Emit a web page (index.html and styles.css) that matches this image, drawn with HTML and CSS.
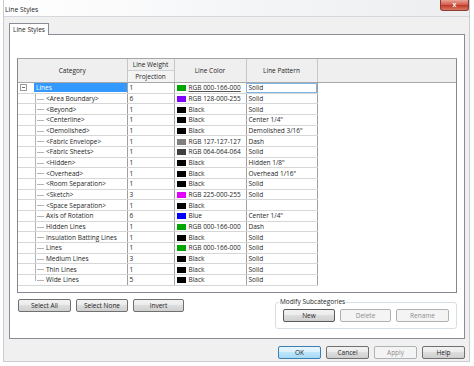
FILE: index.html
```html
<!DOCTYPE html>
<html lang="en">
<head>
    <meta charset="UTF-8">
    <title>Line Styles</title>
    <link rel="stylesheet" href="styles.css">
</head>
<body>

    <div class="window">
        <div class="titlebar">
            <span class="title">Line Styles</span>
            <span class="close">x</span>
        </div>

        <div class="client">
            <div class="tabs">
                <div class="tab">Line Styles</div>
            </div>

            <div class="panel">
                <!-- Line styles grid -->
                <div class="grid">
                    <table>
                        <colgroup>
                            <col class="c-cat">
                            <col class="c-weight">
                            <col class="c-color">
                            <col class="c-pattern">
                            <col>
                        </colgroup>
                        <thead>
                            <tr class="h1">
                                <th rowspan="2">Category</th>
                                <th>Line Weight</th>
                                <th rowspan="2">Line Color</th>
                                <th rowspan="2">Line Pattern</th>
                                <th rowspan="2" class="blank"></th>
                            </tr>
                            <tr class="h2">
                                <th>Projection</th>
                            </tr>
                        </thead>
                        <tbody>
                            <tr class="selected">
                                <td class="cat"><span class="expander"></span><span class="sel">Lines</span></td>
                                <td>1</td>
                                <td><span class="sw" style="background:#00a600"></span><u>RGB 000-166-000</u></td>
                                <td class="focus">Solid</td>
                                <td></td>
                            </tr>
                            <tr><td class="cat child">&lt;Area Boundary&gt;</td><td>6</td><td><span class="sw" style="background:#8000ff"></span>RGB 128-000-255</td><td>Solid</td><td></td></tr>
                            <tr><td class="cat child">&lt;Beyond&gt;</td><td>1</td><td><span class="sw" style="background:#000"></span>Black</td><td>Solid</td><td></td></tr>
                            <tr><td class="cat child">&lt;Centerline&gt;</td><td>1</td><td><span class="sw" style="background:#000"></span>Black</td><td>Center 1/4"</td><td></td></tr>
                            <tr><td class="cat child">&lt;Demolished&gt;</td><td>1</td><td><span class="sw" style="background:#000"></span>Black</td><td>Demolished 3/16"</td><td></td></tr>
                            <tr><td class="cat child">&lt;Fabric Envelope&gt;</td><td>1</td><td><span class="sw" style="background:#7f7f7f"></span>RGB 127-127-127</td><td>Dash</td><td></td></tr>
                            <tr><td class="cat child">&lt;Fabric Sheets&gt;</td><td>1</td><td><span class="sw" style="background:#404040"></span>RGB 064-064-064</td><td>Solid</td><td></td></tr>
                            <tr><td class="cat child">&lt;Hidden&gt;</td><td>1</td><td><span class="sw" style="background:#000"></span>Black</td><td>Hidden 1/8"</td><td></td></tr>
                            <tr><td class="cat child">&lt;Overhead&gt;</td><td>1</td><td><span class="sw" style="background:#000"></span>Black</td><td>Overhead 1/16"</td><td></td></tr>
                            <tr><td class="cat child">&lt;Room Separation&gt;</td><td>1</td><td><span class="sw" style="background:#000"></span>Black</td><td>Solid</td><td></td></tr>
                            <tr><td class="cat child">&lt;Sketch&gt;</td><td>3</td><td><span class="sw" style="background:#e100ff"></span>RGB 225-000-255</td><td>Solid</td><td></td></tr>
                            <tr><td class="cat child">&lt;Space Separation&gt;</td><td>1</td><td><span class="sw" style="background:#000"></span>Black</td><td></td><td></td></tr>
                            <tr><td class="cat child">Axis of Rotation</td><td>6</td><td><span class="sw" style="background:#0000ff"></span>Blue</td><td>Center 1/4"</td><td></td></tr>
                            <tr><td class="cat child">Hidden Lines</td><td>1</td><td><span class="sw" style="background:#00a600"></span>RGB 000-166-000</td><td>Dash</td><td></td></tr>
                            <tr><td class="cat child">Insulation Batting Lines</td><td>1</td><td><span class="sw" style="background:#000"></span>Black</td><td>Solid</td><td></td></tr>
                            <tr><td class="cat child">Lines</td><td>1</td><td><span class="sw" style="background:#00a600"></span>RGB 000-166-000</td><td>Solid</td><td></td></tr>
                            <tr><td class="cat child">Medium Lines</td><td>3</td><td><span class="sw" style="background:#000"></span>Black</td><td>Solid</td><td></td></tr>
                            <tr><td class="cat child">Thin Lines</td><td>1</td><td><span class="sw" style="background:#000"></span>Black</td><td>Solid</td><td></td></tr>
                            <tr><td class="cat child last">Wide Lines</td><td>5</td><td><span class="sw" style="background:#000"></span>Black</td><td>Solid</td><td></td></tr>
                        </tbody>
                    </table>
                </div>

                <div class="actions">
                    <div class="select-buttons">
                        <button class="btn w53">Select All</button>
                        <button class="btn w52">Select None</button>
                        <button class="btn w51">Invert</button>
                    </div>

                    <fieldset class="group">
                        <legend>Modify Subcategories</legend>
                        <button class="btn w52 hot">New</button>
                        <button class="btn w51" disabled>Delete</button>
                        <button class="btn w53" disabled>Rename</button>
                    </fieldset>
                </div>
            </div>

            <!-- Dialog buttons -->
            <div class="footer">
                <button class="btn w43 default">OK</button>
                <button class="btn w43">Cancel</button>
                <button class="btn w43" disabled>Apply</button>
                <button class="btn w43">Help</button>
            </div>
        </div>
    </div>

</body>
</html>
```

FILE: styles.css
```css
body {
    margin: 0;
    background: #fff;
    font-family: "Open Sans", Arial, sans-serif;
    font-size: 6.5px;
    color: #1e1e1e;
}

.window {
    margin-left: 3px;
    width: 467px;
    border: 1px solid #c9cdd2;
    border-top: none;
    box-sizing: border-box;
    background: linear-gradient(to right, #ffffff, #f3f4f6 60%, #eceef0);
}

.titlebar {
    height: 16px;
    display: flex;
    justify-content: space-between;
    align-items: flex-start;
}

.title {
    margin: 5px 0 0 1px;
    font-size: 6.8px;
}

.close {
    width: 27px;
    height: 10px;
    border: 1px solid #8c3a34;
    border-top: none;
    border-radius: 0 0 3px 3px;
    background: linear-gradient(#e8a597, #d1594a 50%, #c13b2c 55%, #d77b62);
    color: #fff;
    font-family: "Liberation Sans", Arial, sans-serif;
    font-size: 7px;
    font-weight: bold;
    line-height: 9px;
    text-align: center;
}

.client {
    height: 345px;
    box-sizing: border-box;
    padding: 6px 4px 0 5px;
    background: #f0f0f0;
    border-top: 1px solid #d4d8dc;
}

/* Tab strip */
.tabs {
    display: flex;
    height: 11px;
}

.tab {
    position: relative;
    width: 40px;
    height: 12px;
    box-sizing: border-box;
    border: 1px solid #898c95;
    border-bottom: none;
    background: #fff;
    text-align: center;
    line-height: 11px;
}

.panel {
    height: 305px;
    box-sizing: border-box;
    padding: 23px 7px 0 7px;
    border: 1px solid #898c95;
    background: #fff;
}

/* Grid */
.grid {
    height: 235px;
    box-sizing: border-box;
    border: 1px solid #828790;
    border-top-color: #a5a5a5;
    background: #fff;
}

.grid table {
    width: 100%;
    table-layout: fixed;
    border-collapse: collapse;
}

.c-cat { width: 109px; }
.c-weight { width: 47px; }
.c-color { width: 72px; }
.c-pattern { width: 71px; }

.grid th {
    padding: 0;
    font-weight: normal;
    background: #efefef;
    border: 1px solid #c6c6c6;
    border-top: none;
    border-bottom-color: #a8a8a8;
    line-height: 10px;
}

.grid th:first-child {
    border-left: none;
}

.grid th.blank {
    border-right: none;
}

.grid .h1 th {
    height: 11px;
}

.grid .h2 th {
    height: 11px;
    background: #f4f4f4;
}

.grid .h1 th:nth-child(2) {
    border-bottom-color: #d0d0d0;
}

.grid td {
    height: 9.68px;
    padding: 0 0 0 2px;
    line-height: 9px;
    white-space: nowrap;
    overflow: hidden;
    border-right: 1px solid #a0a0a0;
    border-bottom: 1px solid #d6d6d6;
}

.grid td:last-child {
    border: none;
}

.grid td.cat {
    padding-left: 28px;
}

/* tree connector lines */
.grid td.child {
    background:
        linear-gradient(#b4b4b4, #b4b4b4) 17px 0 / 1px 100% no-repeat,
        linear-gradient(#b4b4b4, #b4b4b4) 19px 5px / 7px 1px no-repeat;
}

.grid td.child.last {
    background:
        linear-gradient(#b4b4b4, #b4b4b4) 17px 0 / 1px 6px no-repeat,
        linear-gradient(#b4b4b4, #b4b4b4) 19px 5px / 7px 1px no-repeat;
}

.grid .selected td.cat {
    padding-left: 1px;
}

.expander {
    display: inline-block;
    width: 5px;
    height: 5px;
    margin: 0 7px 0 1px;
    vertical-align: -1px;
    border: 1px solid #9a9a9a;
    background: linear-gradient(#6d6d6d, #6d6d6d) center / 3px 1px no-repeat, #fdfdfd;
}

.sel {
    display: inline-block;
    width: 94px;
    padding-left: 2px;
    background: #3399ff;
    color: #fff;
}

.grid td.focus {
    outline: 1px solid #7fb4e8;
    outline-offset: -1px;
}

.sw {
    display: inline-block;
    width: 9px;
    height: 6px;
    margin-right: 3px;
    vertical-align: -1px;
}

u {
    text-decoration-color: #555;
}

/* Buttons */
.actions {
    display: flex;
    justify-content: space-between;
    align-items: flex-start;
    margin-top: 6px;
    padding-left: 1px;
}

.select-buttons {
    display: flex;
    gap: 5px;
}

.btn {
    height: 13px;
    box-sizing: border-box;
    padding: 0;
    border: 1px solid #707070;
    border-radius: 2px;
    background: linear-gradient(#f2f2f2, #ebebeb 45%, #dddddd 50%, #cfcfcf);
    font-family: inherit;
    font-size: 6.5px;
    color: #1e1e1e;
    line-height: 10px;
}

.btn:disabled {
    border-color: #adb2b5;
    background: #f4f4f4;
    color: #8d8d8d;
}

.btn.default {
    border-color: #3c7fb1;
    background: linear-gradient(#eaf6fd, #d9f0fc 45%, #bee6fd 50%, #a7d9f5);
}

.btn.hot {
    border-color: #5a5a5a;
}

.w43 { width: 43px; }
.w51 { width: 51px; }
.w52 { width: 52px; }
.w53 { width: 53px; }

.group {
    display: flex;
    gap: 5px;
    width: 182px;
    box-sizing: border-box;
    margin: -1px 0 0;
    padding: 3px 6px 6px 7px;
    border: 1px solid #d5dfe5;
    border-radius: 3px;
}

.group legend {
    padding: 0 1px;
    margin-left: -4px;
    line-height: 8px;
}

.footer {
    display: flex;
    justify-content: flex-end;
    gap: 5px;
    margin-top: 7px;
}
```
